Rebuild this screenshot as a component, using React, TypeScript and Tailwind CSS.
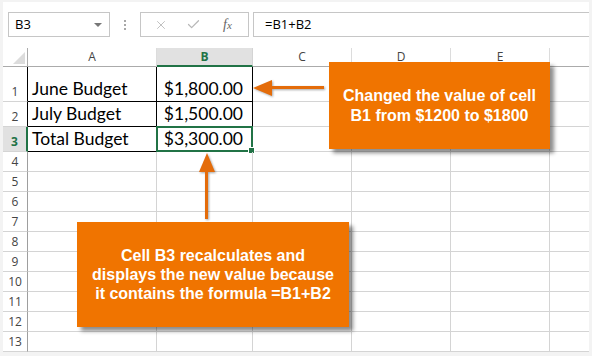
import { X, Check } from 'lucide-react'

type Row = { n: number; h: string; a?: string; b?: string }

const rows: Row[] = [
  { n: 1, h: 'h-[35px]', a: 'June Budget', b: '$1,800.00' },
  { n: 2, h: 'h-[25px]', a: 'July Budget', b: '$1,500.00' },
  { n: 3, h: 'h-[25px]', a: 'Total Budget', b: '$3,300.00' },
  ...[4, 5, 6, 7, 8, 9, 10, 11, 12, 13].map((n) => ({ n, h: 'h-[20px]' })),
]

function FormulaBar() {
  return (
    <div className="flex items-center h-[35px] pt-[10px] pl-[5px] font-['Open_Sans',sans-serif]">
      {/* name box */}
      <div className="relative flex items-center w-[102px] h-[25px] border border-[#c6c6c6] pl-[6px] text-[13px] text-black">
        B3
        <span className="absolute right-[7px] top-[10px] w-0 h-0 border-l-[4px] border-r-[4px] border-t-[4px] border-l-transparent border-r-transparent border-t-[#777]" />
      </div>
      {/* grip dots */}
      <div className="w-[30px] flex flex-col items-center gap-[2px]">
        <span className="w-[2px] h-[2px] bg-[#a8a8a8]" />
        <span className="w-[2px] h-[2px] bg-[#a8a8a8]" />
        <span className="w-[2px] h-[2px] bg-[#a8a8a8]" />
      </div>
      {/* cancel / enter / fx */}
      <div className="flex items-center w-[109px] h-[25px] border border-[#c6c6c6]">
        <X size={14} strokeWidth={1.5} className="ml-[13px] text-[#b8b8b8]" />
        <Check size={15} strokeWidth={2} className="ml-[18px] text-[#b8b8b8]" />
        <span className="ml-[22px] italic text-[14px] text-[#666] font-['Liberation_Serif',serif]">
          f<span className="text-[11px]">x</span>
        </span>
      </div>
      {/* formula input */}
      <div className="flex items-center ml-[4px] flex-1 h-[25px] border-y border-l border-[#c6c6c6] pl-[11px] text-[13px] text-black">
        =B1+B2
      </div>
    </div>
  )
}

function HeaderRow() {
  const cols = ['A', 'B', 'C', 'D', 'E', '']
  return (
    <>
      <div className="relative h-[19px] border-b border-r border-[#ababab]">
        <svg className="absolute left-[10px] top-[4px]" width="12" height="12" viewBox="0 0 12 12">
          <polygon points="12,0 12,12 0,12" fill="#dcdcdc" />
        </svg>
      </div>
      {cols.map((c) =>
        c === 'B' ? (
          <div
            key={c}
            className="h-[19px] flex items-center justify-center bg-[#e1e1e1] border-b-2 border-r border-b-[#217346] border-r-[#d4d4d4] text-[12px] font-bold text-[#217346]"
          >
            {c}
          </div>
        ) : (
          <div
            key={c || 'x'}
            className={`h-[19px] flex items-center justify-center border-b border-b-[#ababab] text-[12px] text-[#444] ${
              c ? 'border-r border-r-[#dcdcdc]' : ''
            }`}
          >
            {c}
          </div>
        )
      )}
    </>
  )
}

export default function App() {
  return (
    <div className="relative w-[592px] h-[356px] bg-[#f3f3f3] pt-[2px] px-[3px] pb-[4px] overflow-hidden">
      <div className="bg-white h-full">
        <FormulaBar />
        <div className="h-[11px]" />

        <div className="grid grid-cols-[25px_129px_96px_99px_99px_99px_39px] font-['Open_Sans',sans-serif]">
          <HeaderRow />

          {rows.map((r) => {
            const inTable = r.n <= 3
            const sel = r.n === 3
            return (
              <div key={r.n} className="contents">
                {/* row header */}
                <div
                  className={`${r.h} flex items-end justify-center pb-[1px] border-b border-b-[#d4d4d4] text-[12px] leading-[16px] ${
                    sel
                      ? 'bg-[#e1e1e1] border-r-2 border-r-[#217346] font-bold text-[#217346]'
                      : inTable
                        ? 'border-r border-r-black text-[#444]'
                        : 'border-r border-r-[#9e9e9e] text-[#444]'
                  }`}
                >
                  {r.n}
                </div>
                {/* A */}
                <div
                  className={`${r.h} flex items-end pl-[4px] pb-[1px] border-r border-b text-[17.5px] leading-[22px] text-black font-['Lato',sans-serif] ${
                    inTable ? 'border-black' : 'border-[#d4d4d4]'
                  }`}
                >
                  {r.a}
                </div>
                {/* B */}
                <div
                  className={`relative ${r.h} flex items-end justify-end pr-[9px] pb-[1px] border-r border-b text-[17.5px] leading-[22px] text-black font-['Lato',sans-serif] ${
                    inTable ? 'border-black' : 'border-[#d4d4d4]'
                  }`}
                >
                  {r.b}
                  {sel && (
                    <>
                      <span className="absolute -left-px -top-px -right-px -bottom-px border-2 border-[#217346]" />
                      <span className="absolute -right-[3px] -bottom-[3px] w-[5px] h-[5px] bg-[#217346] border border-white box-content" />
                    </>
                  )}
                </div>
                <div className={`${r.h} border-r border-b border-[#d4d4d4]`} />
                <div className={`${r.h} border-r border-b border-[#d4d4d4]`} />
                <div className={`${r.h} border-r border-b border-[#d4d4d4]`} />
                <div className={`${r.h} border-b border-[#d4d4d4]`} />
              </div>
            )
          })}
        </div>
      </div>

      {/* arrows */}
      <svg
        className="absolute inset-0 pointer-events-none [filter:drop-shadow(1px_1px_1px_rgba(0,0,0,0.35))]"
        width="592"
        height="356"
        viewBox="0 0 592 356"
      >
        <rect x="268" y="86" width="56" height="3" fill="#e46c0a" />
        <polygon points="253,88 272,80 272,96" fill="#e46c0a" />
        <rect x="205" y="168" width="3" height="51" fill="#e46c0a" />
        <polygon points="207,153 199,172 215,172" fill="#e46c0a" />
      </svg>

      {/* callouts */}
      <div className="absolute left-[329px] top-[62px] w-[221px] h-[87px] bg-[#f07400] shadow-[4px_4px_4px_rgba(0,0,0,0.45)] flex items-center justify-center text-center text-white font-bold text-[16px] leading-[20px] font-['Liberation_Sans',Arial,sans-serif]">
        <p>
          Changed the value of cell
          <br />
          B1 from $1200 to $1800
        </p>
      </div>
      <div className="absolute left-[77px] top-[222px] w-[272px] h-[105px] bg-[#f07400] shadow-[4px_4px_4px_rgba(0,0,0,0.45)] flex items-center justify-center text-center text-white font-bold text-[16px] leading-[19px] font-['Liberation_Sans',Arial,sans-serif]">
        <p>
          Cell B3 recalculates and
          <br />
          displays the new value because
          <br />
          it contains the formula =B1+B2
        </p>
      </div>
    </div>
  )
}
